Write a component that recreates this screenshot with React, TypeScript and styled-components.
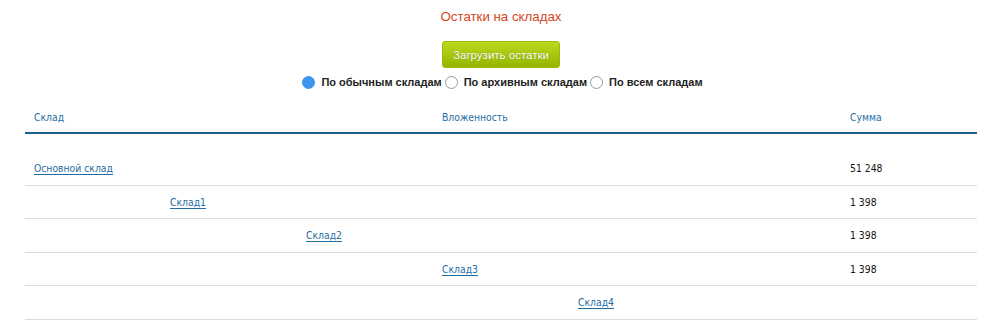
import React from "react";
import styled, { createGlobalStyle } from "styled-components";

const Global = createGlobalStyle`
  html, body { margin: 0; padding: 0; background: #fff; }
  body { font-family: "Liberation Sans", Arial, sans-serif; }
`;

const Page = styled.div`
  box-sizing: border-box;
  width: 992px;
  padding-left: 10px;
  display: flex;
  flex-direction: column;
  align-items: center;
`;

const Title = styled.h1`
  margin: 8px 0 0;
  font-size: 13.3px;
  font-weight: normal;
  color: #d4461c;
  line-height: 18px;
`;

const LoadButton = styled.button`
  margin-top: 15px;
  width: 118px;
  height: 27px;
  border: 1px solid #9dbb06;
  border-radius: 3px;
  background: linear-gradient(#bcd81f, #94b600);
  color: #fff;
  font-family: "Liberation Sans", Arial, sans-serif;
  font-size: 11.5px;
  text-shadow: 0 0 1px rgba(80, 100, 0, 0.6);
  padding: 0;
  cursor: pointer;
`;

const RadioRow = styled.div`
  margin-top: 6px;
  display: flex;
  align-items: center;
  height: 16px;
`;

const RadioLabel = styled.label`
  display: flex;
  align-items: center;
  font-size: 11px;
  font-weight: bold;
  color: #222;
  cursor: pointer;
`;

const RadioDot = styled.span<{ $on?: boolean }>`
  box-sizing: border-box;
  width: 13px;
  height: 13px;
  border-radius: 50%;
  margin: 0 6px 0 3px;
  background: ${(p) => (p.$on ? "#3d95f0" : "#fff")};
  border: 1px solid ${(p) => (p.$on ? "#3d95f0" : "#9a9a9a")};
`;

const Table = styled.table`
  margin-top: 12px;
  width: 952px;
  border-collapse: collapse;
  table-layout: fixed;
  font-family: Tahoma, "DejaVu Sans Condensed", "DejaVu Sans", sans-serif;
  font-size: 10.3px;
`;

const Th = styled.th`
  text-align: left;
  font-weight: normal;
  color: #1f6da3;
  padding: 0 9px;
  height: 30px;
  border-bottom: 2px solid #1f5f8b;
`;

const Td = styled.td`
  padding: 0 9px;
  height: 32.5px;
  border-bottom: 1px solid #dcdcdc;
  color: #111;
  white-space: nowrap;
`;

const SpacerTd = styled.td`
  height: 18px;
  padding: 0;
`;

const Link = styled.a`
  color: #1f6da3;
  text-decoration: underline;
  text-underline-offset: 2px;
  cursor: pointer;
`;

const rows = [
  { name: "Основной склад", depth: 0, sum: "51 248" },
  { name: "Склад1", depth: 1, sum: "1 398" },
  { name: "Склад2", depth: 2, sum: "1 398" },
  { name: "Склад3", depth: 3, sum: "1 398" },
  { name: "Склад4", depth: 4, sum: "" },
];

export default function App() {
  return (
    <>
      <Global />
      <Page>
        <Title>Остатки на складах</Title>
        <LoadButton>Загрузить остатки</LoadButton>
        <RadioRow>
          <RadioLabel>
            <RadioDot $on />
            По обычным складам
          </RadioLabel>
          <RadioLabel>
            <RadioDot />
            По архивным складам
          </RadioLabel>
          <RadioLabel>
            <RadioDot />
            По всем складам
          </RadioLabel>
        </RadioRow>
        <Table>
          <colgroup>
            {Array.from({ length: 7 }).map((_, i) => (
              <col key={i} style={{ width: 136 }} />
            ))}
          </colgroup>
          <thead>
            <tr>
              <Th colSpan={3}>Склад</Th>
              <Th colSpan={3}>Вложенность</Th>
              <Th>Сумма</Th>
            </tr>
          </thead>
          <tbody>
            <tr>
              <SpacerTd colSpan={7} />
            </tr>
            {rows.map((r) => (
              <tr key={r.name}>
                {r.depth > 0 && <Td colSpan={r.depth} />}
                <Td colSpan={6 - r.depth}>
                  <Link>{r.name}</Link>
                </Td>
                <Td>{r.sum}</Td>
              </tr>
            ))}
          </tbody>
        </Table>
      </Page>
    </>
  );
}
